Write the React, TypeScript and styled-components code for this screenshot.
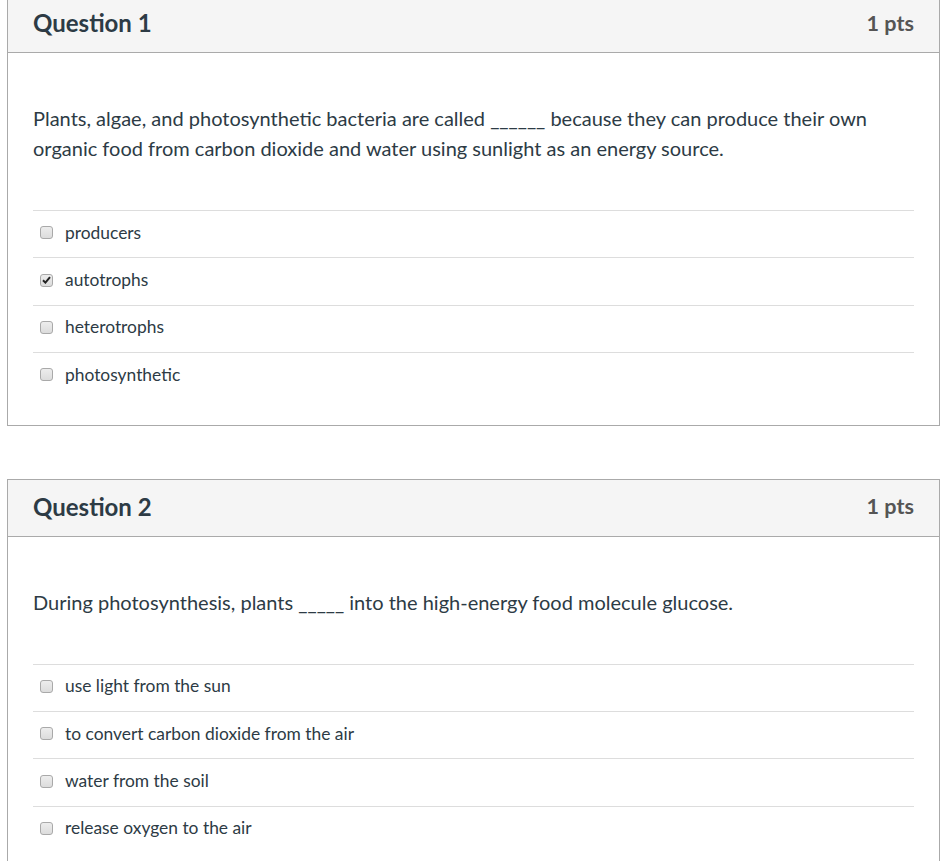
import React from "react";
import styled, { createGlobalStyle } from "styled-components";

const GlobalStyle = createGlobalStyle`
  html, body {
    margin: 0;
    padding: 0;
    background: #ffffff;
  }
  body {
    font-family: Lato, "Open Sans", "Liberation Sans", sans-serif;
    color: #2d3b45;
  }
`;

const Page = styled.div`
  margin-top: -5px;
  padding-left: 7px;
`;

const Card = styled.section`
  box-sizing: border-box;
  width: 933px;
  border: 1px solid #aaaaaa;
  background: #ffffff;
  margin-bottom: 53px;
`;

const Header = styled.header`
  box-sizing: border-box;
  height: 57px;
  display: flex;
  align-items: center;
  justify-content: space-between;
  padding: 0 25px 3px 25px;
  background: #f5f5f5;
  border-bottom: 1px solid #aaaaaa;
`;

const Title = styled.h2`
  margin: 0;
  font-size: 24px;
  font-weight: 700;
  color: #2d3b45;
`;

const Points = styled.div`
  font-size: 21.6px;
  font-weight: 700;
  color: #555555;
`;

const Body = styled.div`
  padding: 50px 25px 25px 25px;
`;

const QuestionText = styled.p`
  margin: 0;
  font-size: 20px;
  line-height: 30px;
  color: #2d3b45;
`;

const AnswerList = styled.ul`
  list-style: none;
  margin: 47px 0 0 0;
  padding: 0;
`;

const AnswerRow = styled.li`
  box-sizing: border-box;
  height: 47.4px;
  display: flex;
  align-items: center;
  border-top: 1px solid #dddddd;
  padding: 0 0 3px 7px;
  font-size: 17.4px;
  color: #2d3b45;
`;

const Box = styled.span<{ $checked?: boolean }>`
  box-sizing: border-box;
  width: 13px;
  height: 13px;
  flex: 0 0 13px;
  margin-right: 12px;
  border: 1px solid #a9a9a9;
  border-radius: 3px;
  background: linear-gradient(#ededed, #dcdcdc);
  display: flex;
  align-items: center;
  justify-content: center;
`;

const Label = styled.span`
  line-height: 20px;
`;

function Check() {
  return (
    <svg width="9" height="8" viewBox="0 0 9 8">
      <path d="M1 4.2 L3.4 6.6 L8 1.2" fill="none" stroke="#222" strokeWidth="2" />
    </svg>
  );
}

type Answer = { text: string; checked?: boolean };

type Q = { title: string; pts: string; text: string; answers: Answer[] };

const questions: Q[] = [
  {
    title: "Question 1",
    pts: "1 pts",
    text:
      "Plants, algae, and photosynthetic bacteria are called ______ because they can produce their own organic food from carbon dioxide and water using sunlight as an energy source.",
    answers: [
      { text: "producers" },
      { text: "autotrophs", checked: true },
      { text: "heterotrophs" },
      { text: "photosynthetic" },
    ],
  },
  {
    title: "Question 2",
    pts: "1 pts",
    text: "During photosynthesis, plants _____ into the high-energy food molecule glucose.",
    answers: [
      { text: "use light from the sun" },
      { text: "to convert carbon dioxide from the air" },
      { text: "water from the soil" },
      { text: "release oxygen to the air" },
    ],
  },
];

export default function App() {
  return (
    <>
      <GlobalStyle />
      <Page>
        {questions.map((q) => (
          <Card key={q.title}>
            <Header>
              <Title>{q.title}</Title>
              <Points>{q.pts}</Points>
            </Header>
            <Body>
              <QuestionText>{q.text}</QuestionText>
              <AnswerList>
                {q.answers.map((a) => (
                  <AnswerRow key={a.text}>
                    <Box $checked={a.checked}>{a.checked && <Check />}</Box>
                    <Label>{a.text}</Label>
                  </AnswerRow>
                ))}
              </AnswerList>
            </Body>
          </Card>
        ))}
      </Page>
    </>
  );
}
